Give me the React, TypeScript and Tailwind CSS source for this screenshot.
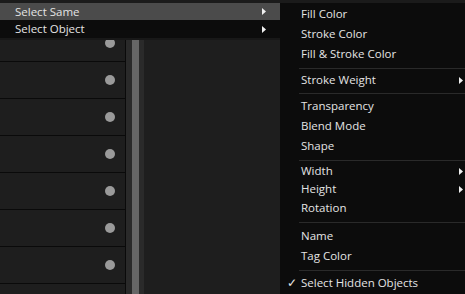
import React from 'react'

type SubItem =
  | { kind: 'item'; label: string; h: string; arrow?: boolean; checked?: boolean }
  | { kind: 'sep'; cls: string }

const subItems: SubItem[] = [
  { kind: 'item', label: 'Fill Color', h: 'h-[20px]' },
  { kind: 'item', label: 'Stroke Color', h: 'h-[20px]' },
  { kind: 'item', label: 'Fill & Stroke Color', h: 'h-[20px]' },
  { kind: 'sep', cls: 'pt-[4px] pb-[1px]' },
  { kind: 'item', label: 'Stroke Weight', h: 'h-[20px]', arrow: true },
  { kind: 'sep', cls: 'pt-[3px] pb-[2px]' },
  { kind: 'item', label: 'Transparency', h: 'h-[20px]' },
  { kind: 'item', label: 'Blend Mode', h: 'h-[20px]' },
  { kind: 'item', label: 'Shape', h: 'h-[20px]' },
  { kind: 'sep', cls: 'pt-[4px] pb-[1px]' },
  { kind: 'item', label: 'Width', h: 'h-[18px]', arrow: true },
  { kind: 'item', label: 'Height', h: 'h-[18px]', arrow: true },
  { kind: 'item', label: 'Rotation', h: 'h-[20px]' },
  { kind: 'sep', cls: 'pt-[4px] pb-[3px]' },
  { kind: 'item', label: 'Name', h: 'h-[20px]' },
  { kind: 'item', label: 'Tag Color', h: 'h-[20px]' },
  { kind: 'sep', cls: 'pt-[4px] pb-[2px]' },
  { kind: 'item', label: 'Select Hidden Objects', h: 'h-[20px]', checked: true },
]

// small white submenu triangle
function Arrow() {
  return (
    <svg width="4" height="7" viewBox="0 0 4 7" className="shrink-0">
      <path d="M0 0 L4 3.5 L0 7 Z" fill="#f0f0f0" />
    </svg>
  )
}

export default function App() {
  return (
    <div
      className="relative w-[465px] h-[294px] overflow-hidden bg-[#1e1e1e] text-[#e4e4e4] text-[11.5px]"
      style={{ fontFamily: '"Open Sans", "Noto Sans", sans-serif' }}
    >
      {/* app bar strip */}
      <div className="h-[3px] bg-[#1b1b1b]" />

      {/* layer list + scrollbar */}
      <div className="flex h-[291px]">
        <div className="w-[126px] flex flex-col border-r border-[#0a0a0a]">
          <div className="h-[22px] shrink-0 border-b border-[#0a0a0a]" />
          {[0, 1, 2, 3, 4, 5, 6, 7].map(i => (
            <div
              key={i}
              className="h-[37px] shrink-0 flex items-center justify-end pr-[10px] border-b border-[#0a0a0a] bg-[#1e1e1e]"
            >
              <div className="w-[10px] h-[10px] rounded-full bg-[#9a9a9a]" />
            </div>
          ))}
        </div>
        <div className="w-[18px] flex bg-[#2a2a2a] pl-[6px] pr-[5px]">
          <div className="w-[7px] bg-[#666666]" />
        </div>
        <div className="flex-1 bg-[#1e1e1e]" />
      </div>

      {/* context menu */}
      <div className="absolute left-0 top-[3px] w-[280px] bg-[#0c0c0c] border-b-2 border-[#181818]">
        <div className="h-[17px] flex items-center pl-[15px] pr-[14px] bg-[#4b4b4b]">
          <span className="flex-1">Select Same</span>
          <Arrow />
        </div>
        <div className="h-[18px] flex items-center pl-[15px] pr-[14px]">
          <span className="flex-1">Select Object</span>
          <Arrow />
        </div>
      </div>

      {/* submenu */}
      <div className="absolute left-[280px] top-[3px] right-0 bottom-0 bg-[#0c0c0c] pt-[1px]">
        {subItems.map((it, i) =>
          it.kind === 'sep' ? (
            <div key={i} className={`pl-[19px] ${it.cls}`}>
              <div className="h-px bg-[#2a2a2a]" />
            </div>
          ) : (
            <div key={i} className={`${it.h} flex items-center pr-[2px]`}>
              <span className="w-[21px] shrink-0 text-[12px] text-right pr-[4px]">
                {it.checked ? '✓' : ''}
              </span>
              <span className="flex-1">{it.label}</span>
              {it.arrow && <Arrow />}
            </div>
          )
        )}
      </div>
    </div>
  )
}
